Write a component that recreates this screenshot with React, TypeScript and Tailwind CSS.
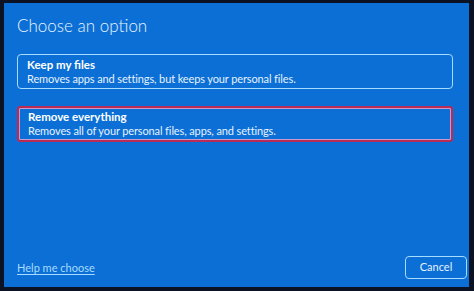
export default function App() {
  return (
    <div className="w-[474px] h-[291px] bg-[#0a1224] pt-[3px] pb-[4px] pl-[4px] pr-[5px]" style={{ fontFamily: 'Lato, "Noto Sans", sans-serif' }}>
      <div className="h-full bg-[#0b6fd5] flex flex-col pl-[13px] pr-[2px]">
        <h1 className="text-[17px] leading-none font-light text-[#e8f4ff] mt-[14px]">Choose an option</h1>
        <div className="mt-[20px] mr-[14px] flex flex-col gap-[17px]">
          <div className="h-[35px] rounded-[4px] border-[1.5px] border-[#a5dcff] px-[9px] flex flex-col justify-center">
            <div className="text-[11.5px] leading-[14px] font-bold text-white">Keep my files</div>
            <div className="text-[11px] leading-[14px] text-[#e6f2ff] tracking-[-0.12px]">Removes apps and settings, but keeps your personal files.</div>
          </div>
          <div className="h-[36px] rounded-[3px] border-[2px] border-[#b82c55] shadow-[inset_0_0_0_1px_#c89ad0] px-[9px] flex flex-col justify-center">
            <div className="text-[11.5px] leading-[14px] font-bold text-white">Remove everything</div>
            <div className="text-[11px] leading-[14px] text-[#e6f2ff] tracking-[-0.12px]">Removes all of your personal files, apps, and settings.</div>
          </div>
        </div>
        <div className="mt-auto mb-[8px] flex items-end justify-between">
          <a className="text-[11px] leading-none text-[#a8dcff] underline underline-offset-2 mb-[6px]">Help me choose</a>
          <button className="w-[62px] h-[23px] rounded-[4px] border-[1.5px] border-[#a5dcff] text-[11px] text-[#e6f2ff] flex items-center justify-center">Cancel</button>
        </div>
      </div>
    </div>
  );
}
